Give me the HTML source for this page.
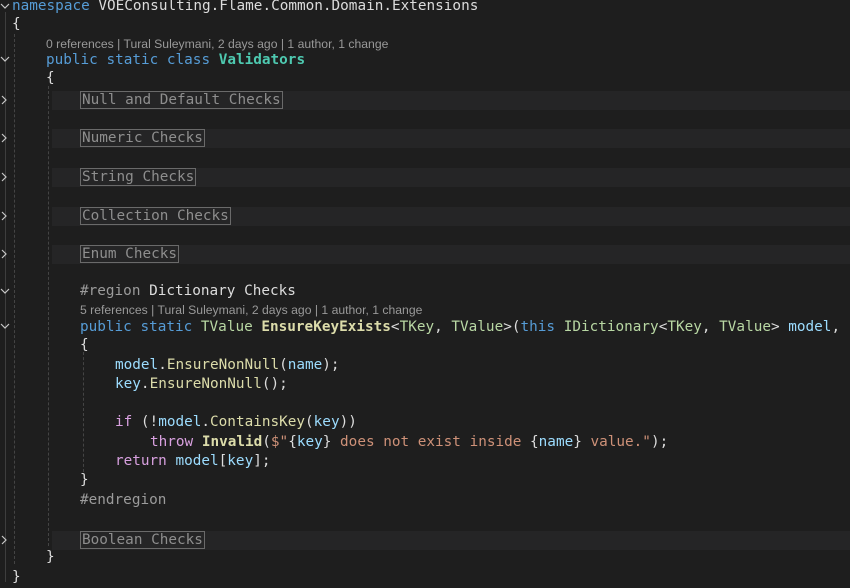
<!DOCTYPE html>
<html><head><meta charset="utf-8"><style>
body{margin:0;width:850px;height:588px;background:#1e1e1e;overflow:hidden;position:relative;font-family:"DejaVu Sans Mono","Liberation Mono",monospace;font-size:14.35px;color:#dcdcdc}
.l{position:absolute;height:18px;line-height:18px;white-space:pre}
.cl{position:absolute;font-family:"Liberation Sans","DejaVu Sans",sans-serif;font-size:12.2px;color:#999;white-space:pre;line-height:14px}
.k{color:#569cd6}.t{color:#4ec9b0}.m{color:#dcdcaa}.v{color:#9cdcfe}.s{color:#ce9178}.c{color:#d8a0df}.g{color:#9b9b9b}.tv{color:#b8d7a3}
.box{border:1px solid #6a6a6a;color:#8e8e8e;padding:0 1px;line-height:16px;display:inline-block}
.bar{position:absolute;left:52px;right:0;height:19px;background:#252526}
.vg{position:absolute;width:0;border-left:1px dashed #444}
svg.ch{position:absolute;left:0;width:10px;height:10px}
</style></head><body>
<div style="position:absolute;left:5px;top:12px;height:570px;border-left:1px solid #3e3e3e"></div>
<div class="vg" style="left:14px;top:34px;height:530px"></div>
<div class="vg" style="left:48px;top:86px;height:460px"></div>
<div class="vg" style="left:83px;top:352px;height:120px"></div>
<div class="bar" style="top:91px"></div><div class="bar" style="top:129px"></div><div class="bar" style="top:168px"></div><div class="bar" style="top:207px"></div><div class="bar" style="top:245px"></div><div class="bar" style="top:531px"></div>
<svg class="ch" style="top:1px"><path d="M1 3l4 4 4-4" fill="none" stroke="#c8c8c8" stroke-width="1.2"/></svg>
<svg class="ch" style="top:54px"><path d="M1 3l4 4 4-4" fill="none" stroke="#c8c8c8" stroke-width="1.2"/></svg>
<svg class="ch" style="top:286px"><path d="M1 3l4 4 4-4" fill="none" stroke="#c8c8c8" stroke-width="1.2"/></svg>
<svg class="ch" style="top:321px"><path d="M1 3l4 4 4-4" fill="none" stroke="#c8c8c8" stroke-width="1.2"/></svg>
<svg class="ch" style="top:95px"><path d="M2 1l4 4-4 4" fill="none" stroke="#c8c8c8" stroke-width="1.2"/></svg>
<svg class="ch" style="top:133px"><path d="M2 1l4 4-4 4" fill="none" stroke="#c8c8c8" stroke-width="1.2"/></svg>
<svg class="ch" style="top:172px"><path d="M2 1l4 4-4 4" fill="none" stroke="#c8c8c8" stroke-width="1.2"/></svg>
<svg class="ch" style="top:211px"><path d="M2 1l4 4-4 4" fill="none" stroke="#c8c8c8" stroke-width="1.2"/></svg>
<svg class="ch" style="top:249px"><path d="M2 1l4 4-4 4" fill="none" stroke="#c8c8c8" stroke-width="1.2"/></svg>
<svg class="ch" style="top:535px"><path d="M2 1l4 4-4 4" fill="none" stroke="#c8c8c8" stroke-width="1.2"/></svg>
<div class="l" style="left:12px;top:-3px"><span class="k">namespace</span> VOEConsulting.Flame.Common.Domain.Extensions</div>
<div class="l" style="left:12px;top:15px">{</div>
<div class="cl" style="left:46px;top:37px">0 references | Tural Suleymani, 2 days ago | 1 author, 1 change</div>
<div class="l" style="left:46px;top:51px"><span class="k">public static class</span> <span class="t" style="font-weight:bold">Validators</span></div>
<div class="l" style="left:46px;top:69px">{</div>
<div class="l" style="left:80px;top:91px"><span class="box">Null and Default Checks</span></div>
<div class="l" style="left:80px;top:129px"><span class="box">Numeric Checks</span></div>
<div class="l" style="left:80px;top:168px"><span class="box">String Checks</span></div>
<div class="l" style="left:80px;top:207px"><span class="box">Collection Checks</span></div>
<div class="l" style="left:80px;top:245px"><span class="box">Enum Checks</span></div>
<div class="l" style="left:80px;top:282px"><span class="g">#region</span> Dictionary Checks</div>
<div class="cl" style="left:80px;top:303px">5 references | Tural Suleymani, 2 days ago | 1 author, 1 change</div>
<div class="l" style="left:80px;top:318px"><span class="k">public static</span> <span class="tv">TValue</span> <span class="m" style="font-weight:bold">EnsureKeyExists</span>&lt;<span class="tv">TKey</span>, <span class="tv">TValue</span>&gt;(<span class="k">this</span> <span class="tv">IDictionary</span>&lt;<span class="tv">TKey</span>, <span class="tv">TValue</span>&gt; <span class="v">model</span>, </div>
<div class="l" style="left:80px;top:336px">{</div>
<div class="l" style="left:115px;top:356px"><span class="v">model</span>.<span class="m">EnsureNonNull</span>(<span class="v">name</span>);</div>
<div class="l" style="left:115px;top:375px"><span class="v">key</span>.<span class="m">EnsureNonNull</span>();</div>
<div class="l" style="left:115px;top:413px"><span class="c">if</span> (!<span class="v">model</span>.<span class="m">ContainsKey</span>(<span class="v">key</span>))</div>
<div class="l" style="left:150px;top:433px"><span class="c">throw</span> <span class="m" style="font-weight:bold">Invalid</span>(<span class="s">$"</span>{<span class="v">key</span>}<span class="s"> does not exist inside </span>{<span class="v">name</span>}<span class="s"> value."</span>);</div>
<div class="l" style="left:115px;top:452px"><span class="c">return</span> <span class="v">model</span>[<span class="v">key</span>];</div>
<div class="l" style="left:80px;top:471px">}</div>
<div class="l" style="left:80px;top:491px"><span class="g">#endregion</span></div>
<div class="l" style="left:80px;top:531px"><span class="box">Boolean Checks</span></div>
<div class="l" style="left:46px;top:548px">}</div>
<div class="l" style="left:12px;top:568px">}</div>
</body></html>
